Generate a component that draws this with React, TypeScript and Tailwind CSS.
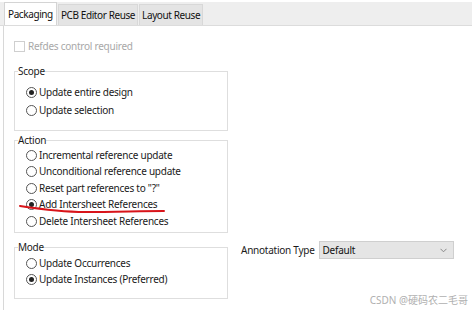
import React from 'react';

function Radio({ checked, label }: { checked?: boolean; label: string }) {
  return (
    <div className="flex items-center h-[16px]">
      <span className="w-[11px] h-[11px] rounded-full border border-[#555] bg-white flex items-center justify-center shrink-0">
        {checked && <span className="w-[5px] h-[5px] rounded-full bg-[#222]" />}
      </span>
      <span className="ml-[2px] text-[#1a1a1a]">{label}</span>
    </div>
  );
}

function Group({ title, children, className }: { title: string; children: React.ReactNode; className?: string }) {
  return (
    <fieldset className={`border border-[#dedede] w-[214px] px-0 m-0 ${className ?? ''}`}>
      <legend className="ml-[3px] px-0 leading-[14px] text-[#1a1a1a]">{title}</legend>
      {children}
    </fieldset>
  );
}

export default function App() {
  return (
    <div
      className="w-[474px] h-[310px] bg-white relative overflow-hidden text-[10px] tracking-[-0.25px]"
      style={{ fontFamily: '"Noto Sans", "Noto Sans CJK SC", sans-serif' }}
    >
      {/* tab strip */}
      <div className="mt-[2px] h-[24px] bg-[#eeeeee] border-b border-[#dcdcdc] flex items-end pl-[4px] mr-[2px] tracking-[-0.4px]">
        <div className="h-[23px] pl-[3px] pr-[3px] bg-white border border-b-0 border-[#d4d4d4] flex items-center text-[#111]">
          Packaging
        </div>
        <div className="h-[21px] px-[2px] ml-[1px] bg-[#e4e4e4] border border-b-0 border-[#d8d8d8] flex items-center text-[#111]">
          PCB Editor Reuse
        </div>
        <div className="h-[21px] px-[2px] ml-[1px] bg-[#e4e4e4] border border-b-0 border-[#d8d8d8] flex items-center text-[#111]">
          Layout Reuse
        </div>
      </div>

      <div className="ml-[3px] border-l border-[#d8d8d8] h-[284px] flex">
        <div className="pl-[10px] w-[237px] shrink-0">
          {/* refdes */}
          <div className="mt-[13px] flex items-center h-[14px]">
            <span className="w-[11px] h-[11px] border border-[#cfcfcf] bg-white" />
            <span className="ml-[3px] text-[#a8a8a8]">Refdes control required</span>
          </div>

          <Group title="Scope" className="mt-[11px] h-[67px]">
            <div className="pl-[11px] pt-[6px] flex flex-col gap-[2px]">
              <Radio checked label="Update entire design" />
              <Radio label="Update selection" />
            </div>
          </Group>

          <Group title="Action" className="mt-[2px] h-[100px]">
            <div className="pl-[11px] pt-0 flex flex-col gap-[0.5px]">
              <Radio label="Incremental reference update" />
              <Radio label="Unconditional reference update" />
              <Radio label={'Reset part references to "?"'} />
              <Radio checked label="Add Intersheet References" />
              <Radio label="Delete Intersheet References" />
            </div>
          </Group>

          <Group title="Mode" className="mt-[7px] h-[59px]">
            <div className="pl-[11px] pt-[1px] flex flex-col gap-0">
              <Radio label="Update Occurrences" />
              <Radio checked label="Update Instances (Preferred)" />
            </div>
          </Group>
        </div>

        <div className="flex-1 pt-[215px]">
          <div className="flex items-center">
            <span className="text-[#1a1a1a]">Annotation Type</span>
            <div className="ml-[4px] w-[135px] h-[18px] bg-[#e5e5e5] border border-[#cfcfcf] flex items-center justify-between px-[3px]">
              <span className="text-[#111]">Default</span>
              <svg width="7" height="5" viewBox="0 0 7 5" className="mr-[3px]">
                <path d="M0.5 0.8 L3.5 3.8 L6.5 0.8" fill="none" stroke="#888" strokeWidth="1" />
              </svg>
            </div>
          </div>
          <div className="mt-[34px] text-right pr-[6px] text-[10px] tracking-normal text-[#b0b0b0]">CSDN @硬码农二毛哥</div>
        </div>
      </div>

      {/* red marker underline */}
      <svg className="absolute left-0 top-0 pointer-events-none" width="474" height="310">
        <path
          d="M20 206 C 40 209, 60 212, 85 212 C 115 212, 140 211, 164 211"
          fill="none"
          stroke="#d8141a"
          strokeWidth="2"
          strokeLinecap="round"
        />
      </svg>
    </div>
  );
}
